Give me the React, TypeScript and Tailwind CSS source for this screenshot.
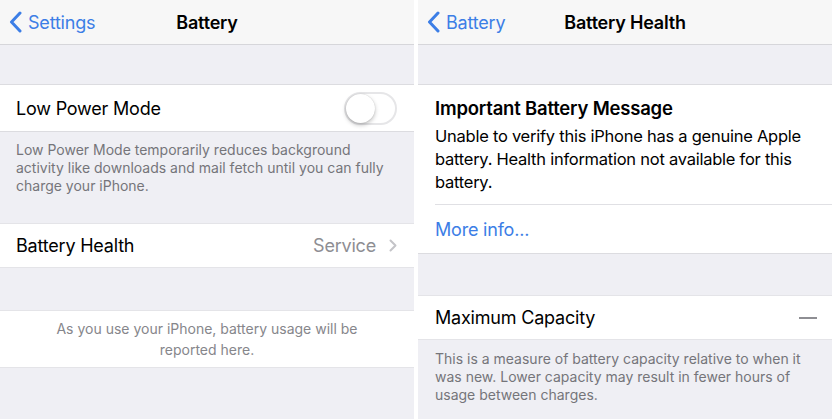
import React from "react";

const font = { fontFamily: "Inter, 'Liberation Sans', sans-serif" };

function BackChevron() {
  return (
    <svg width="13" height="22" viewBox="0 0 13 22" className="shrink-0">
      <path d="M11 2 L2.5 11 L11 20" fill="none" stroke="#3c7ee6" strokeWidth="3" strokeLinecap="round" strokeLinejoin="round" />
    </svg>
  );
}

function NavBar({ back, title }: { back: string; title: string }) {
  return (
    <div className="relative h-[45px] bg-[#f7f7f7] border-b border-[#d6d6da] flex items-center justify-center">
      <div className="absolute left-[9px] top-0 h-full flex items-center gap-[6px]">
        <BackChevron />
        <span className="text-[18px] text-[#3c7ee6] tracking-[-0.2px]">{back}</span>
      </div>
      <span className="text-[18px] font-semibold text-black tracking-[-0.2px]">{title}</span>
    </div>
  );
}

function Toggle() {
  return (
    <div className="w-[53px] h-[33px] rounded-full border-2 border-[#e6e6e8] bg-white relative">
      <div className="absolute left-0 top-0 w-[29px] h-[29px] rounded-full bg-white shadow-[0_2px_4px_rgba(0,0,0,0.25),0_0_1px_rgba(0,0,0,0.2)]" />
    </div>
  );
}

function LeftScreen() {
  return (
    <div className="w-[414px] h-[419px] bg-[#efeff4] flex flex-col overflow-hidden">
      <NavBar back="Settings" title="Battery" />
      <div className="h-[39px] shrink-0" />
      <div className="h-[48px] shrink-0 bg-white border-y border-[#dcdce0] flex items-center justify-between pl-[16px] pr-[17px]">
        <span className="text-[18px] text-black tracking-[-0.2px]">Low Power Mode</span>
        <Toggle />
      </div>
      <div className="h-[91px] shrink-0 pl-[16px] pr-[20px] pt-[9px] text-[14px] leading-[18px] text-[#75757a]">
        Low Power Mode temporarily reduces background activity like downloads and mail fetch until you can fully charge your iPhone.
      </div>
      <div className="h-[45px] shrink-0 bg-white border-y border-[#e4e4e8] flex items-center justify-between pl-[16px] pr-[17px]">
        <span className="text-[18px] text-black tracking-[-0.2px]">Battery Health</span>
        <div className="flex items-center gap-[13px]">
          <span className="text-[18px] text-[#8e8e93] tracking-[-0.2px]">Service</span>
          <svg width="8" height="13" viewBox="0 0 8 13">
            <path d="M1.5 1.5 L6.5 6.5 L1.5 11.5" fill="none" stroke="#c4c4c8" strokeWidth="2" strokeLinecap="round" strokeLinejoin="round" />
          </svg>
        </div>
      </div>
      <div className="h-[42px] shrink-0" />
      <div className="h-[58px] shrink-0 bg-white border-y border-[#e4e4e8] flex items-center justify-center text-center px-[40px] text-[14px] leading-[21px] text-[#86868b]">
        As you use your iPhone, battery usage will be reported here.
      </div>
    </div>
  );
}

function RightScreen() {
  return (
    <div className="w-[414px] h-[419px] bg-[#efeff4] flex flex-col overflow-hidden">
      <NavBar back="Battery" title="Battery Health" />
      <div className="h-[39px] shrink-0" />
      <div className="shrink-0 bg-white border-y border-[#dcdce0] pl-[17px]">
        <div className="pt-[11px] pr-[16px] pb-[10px] border-b border-[#e0e0e4]">
          <div className="text-[18.5px] leading-[24px] font-semibold text-black tracking-[-0.2px]">Important Battery Message</div>
          <div className="mt-[5px] text-[16.5px] leading-[23px] text-black tracking-[-0.25px]">
            Unable to verify this iPhone has a genuine Apple battery. Health information not available for this battery.
          </div>
        </div>
        <div className="h-[48px] flex items-center text-[18px] text-[#3c7ee6] tracking-[-0.2px]">More info...</div>
      </div>
      <div className="h-[41px] shrink-0" />
      <div className="h-[45px] shrink-0 bg-white border-y border-[#e4e4e8] flex items-center justify-between pl-[17px] pr-[15px]">
        <span className="text-[18px] text-black tracking-[-0.2px]">Maximum Capacity</span>
        <div className="w-[18px] h-[2px] bg-[#8e8e93]" />
      </div>
      <div className="pl-[17px] pr-[20px] pt-[10px] text-[14px] leading-[18px] text-[#75757a]">
        This is a measure of battery capacity relative to when it was new. Lower capacity may result in fewer hours of usage between charges.
      </div>
    </div>
  );
}

export default function App() {
  return (
    <div className="w-[832px] h-[419px] bg-white flex gap-[4px]" style={font}>
      <LeftScreen />
      <RightScreen />
    </div>
  );
}
